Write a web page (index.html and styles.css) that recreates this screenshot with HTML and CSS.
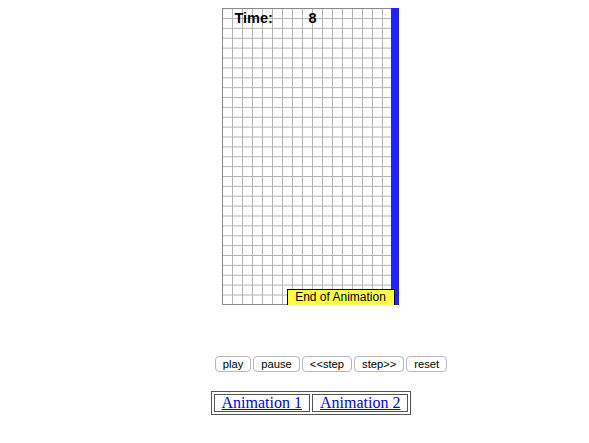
FILE: index.html
```html
<!DOCTYPE html>
<html>
<head>
<meta charset="utf-8">
<title>Animation</title>
<link rel="stylesheet" href="styles.css">
</head>
<body>
<div class="page">
  <div class="stage">
    <div class="time"><span class="time-label">Time:</span><span class="time-value">8</span></div>
    <div class="bar"></div>
    <div class="msg">End of Animation</div>
  </div>
  <div class="controls">
    <button class="btn">play</button>
    <button class="btn">pause</button>
    <button class="btn">&lt;&lt;step</button>
    <button class="btn">step&gt;&gt;</button>
    <button class="btn">reset</button>
  </div>
  <table class="links">
    <tr>
      <td><a href="#">Animation 1</a></td>
      <td><a href="#">Animation 2</a></td>
    </tr>
  </table>
</div>
</body>
</html>
```

FILE: styles.css
```css
html, body {
  margin: 0;
  padding: 0;
  background: #ffffff;
}

.page {
  display: flex;
  flex-direction: column;
  align-items: center;
  padding: 8px 0 0 33px;
}

.stage {
  position: relative;
  width: 176px;
  height: 295px;
  margin-right: 2px;
  border-left: 1px solid #8a8a8a;
  border-top: 1px solid #8a8a8a;
  border-bottom: 1px solid #8a8a8a;
  background-color: #ffffff;
  background-image:
    linear-gradient(to right, #b4b4b4 1px, transparent 1px),
    linear-gradient(to bottom, #b4b4b4 1px, transparent 1px);
  background-size: 10px 9.89px;
  background-position: 9px 9px;
}

.time {
  position: absolute;
  left: 12px;
  top: 1px;
  display: flex;
  font-family: "Liberation Sans", Arial, sans-serif;
  font-weight: bold;
  font-size: 14.5px;
  line-height: 16px;
  color: #000;
}

.time-label {
  width: 74px;
}

.bar {
  position: absolute;
  right: 0;
  top: -1px;
  bottom: -1px;
  width: 8px;
  background: #2222ff;
}

.msg {
  position: absolute;
  left: 64px;
  top: 280px;
  width: 108px;
  height: 16px;
  box-sizing: border-box;
  border: 1px solid #000;
  border-bottom: none;
  background: #ffff44;
  font-family: "Liberation Sans", Arial, sans-serif;
  font-size: 12px;
  line-height: 14px;
  text-align: center;
  color: #000;
}

.controls {
  display: flex;
  gap: 2px;
  margin: 51px 0 0 40px;
}

.btn {
  height: 16px;
  box-sizing: border-box;
  padding: 0 7px;
  margin: 0;
  border: 1px solid #b8b8b8;
  border-radius: 4px;
  background: #ffffff;
  font-family: "Liberation Sans", Arial, sans-serif;
  font-size: 11.2px;
  line-height: 13px;
  color: #000;
}

.links {
  margin-top: 19px;
  border: 1px solid #555;
  border-spacing: 2px;
  border-collapse: separate;
}

.links td {
  border: 1px solid #555;
  padding: 0 7px;
  font-family: "Liberation Serif", "Times New Roman", serif;
  font-size: 16px;
  line-height: 16px;
}

.links a {
  color: #0000ee;
  text-decoration: underline;
}
```
